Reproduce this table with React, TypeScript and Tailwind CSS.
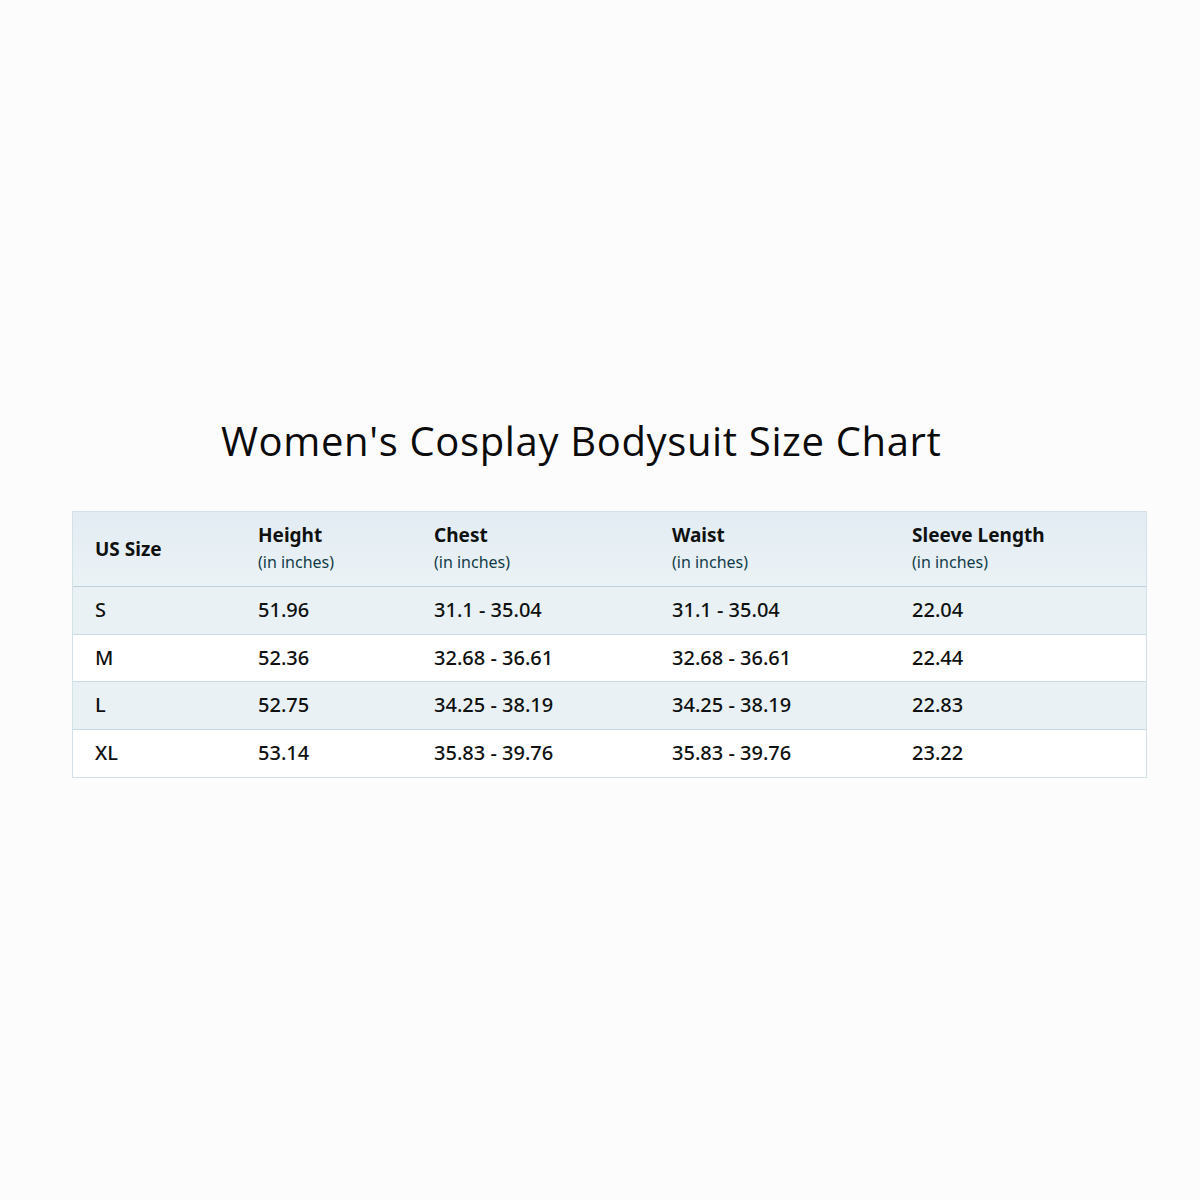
import React from 'react';

const rows = [
  { size: 'S', height: '51.96', chest: '31.1 - 35.04', waist: '31.1 - 35.04', sleeve: '22.04' },
  { size: 'M', height: '52.36', chest: '32.68 - 36.61', waist: '32.68 - 36.61', sleeve: '22.44' },
  { size: 'L', height: '52.75', chest: '34.25 - 38.19', waist: '34.25 - 38.19', sleeve: '22.83' },
  { size: 'XL', height: '53.14', chest: '35.83 - 39.76', waist: '35.83 - 39.76', sleeve: '23.22' },
];

const cols = 'grid grid-cols-[185px_176px_238px_240px_1fr]';

const App: React.FC = () => {
  return (
    <div className="w-[1200px] h-[1200px] bg-[#fdfcfd] flex flex-col" style={{ fontFamily: '"Noto Sans", "Open Sans", sans-serif' }}>
      <h1 className="mt-[416px] ml-[221px] text-[40px] leading-[50px] text-[#0b0b0b] tracking-[0.65px]" style={{ fontFamily: '"Open Sans", "Noto Sans", sans-serif' }}>
        Women's Cosplay Bodysuit Size Chart
      </h1>

      <div className="mt-[45px] ml-[72px] w-[1075px] border border-[#d3e1e8] text-[#0f1111]">
        <div className={`${cols} h-[75px] items-center bg-gradient-to-b from-[#e2ecf2] to-[#ebf2f6] border-b border-[#bcd0db]`}>
          <div className="pl-[22px] text-[19px] font-bold">US Size</div>
          {['Height', 'Chest', 'Waist', 'Sleeve Length'].map((h) => (
            <div key={h} className="flex flex-col">
              <span className="text-[19px] font-bold leading-[26px]">{h}</span>
              <span className="text-[16px] leading-[28px] text-[#133c4a]">(in inches)</span>
            </div>
          ))}
        </div>
        {rows.map((r, i) => (
          <div
            key={r.size}
            className={`${cols} h-[47.5px] items-center text-[20px] font-medium ${i % 2 === 0 ? 'bg-[#eaf1f5]' : 'bg-white'} ${i < rows.length - 1 ? 'border-b border-[#c9dbe4]' : ''}`}
          >
            <div className="pl-[22px]">{r.size}</div>
            <div>{r.height}</div>
            <div>{r.chest}</div>
            <div>{r.waist}</div>
            <div>{r.sleeve}</div>
          </div>
        ))}
      </div>
    </div>
  );
};

export default App;
